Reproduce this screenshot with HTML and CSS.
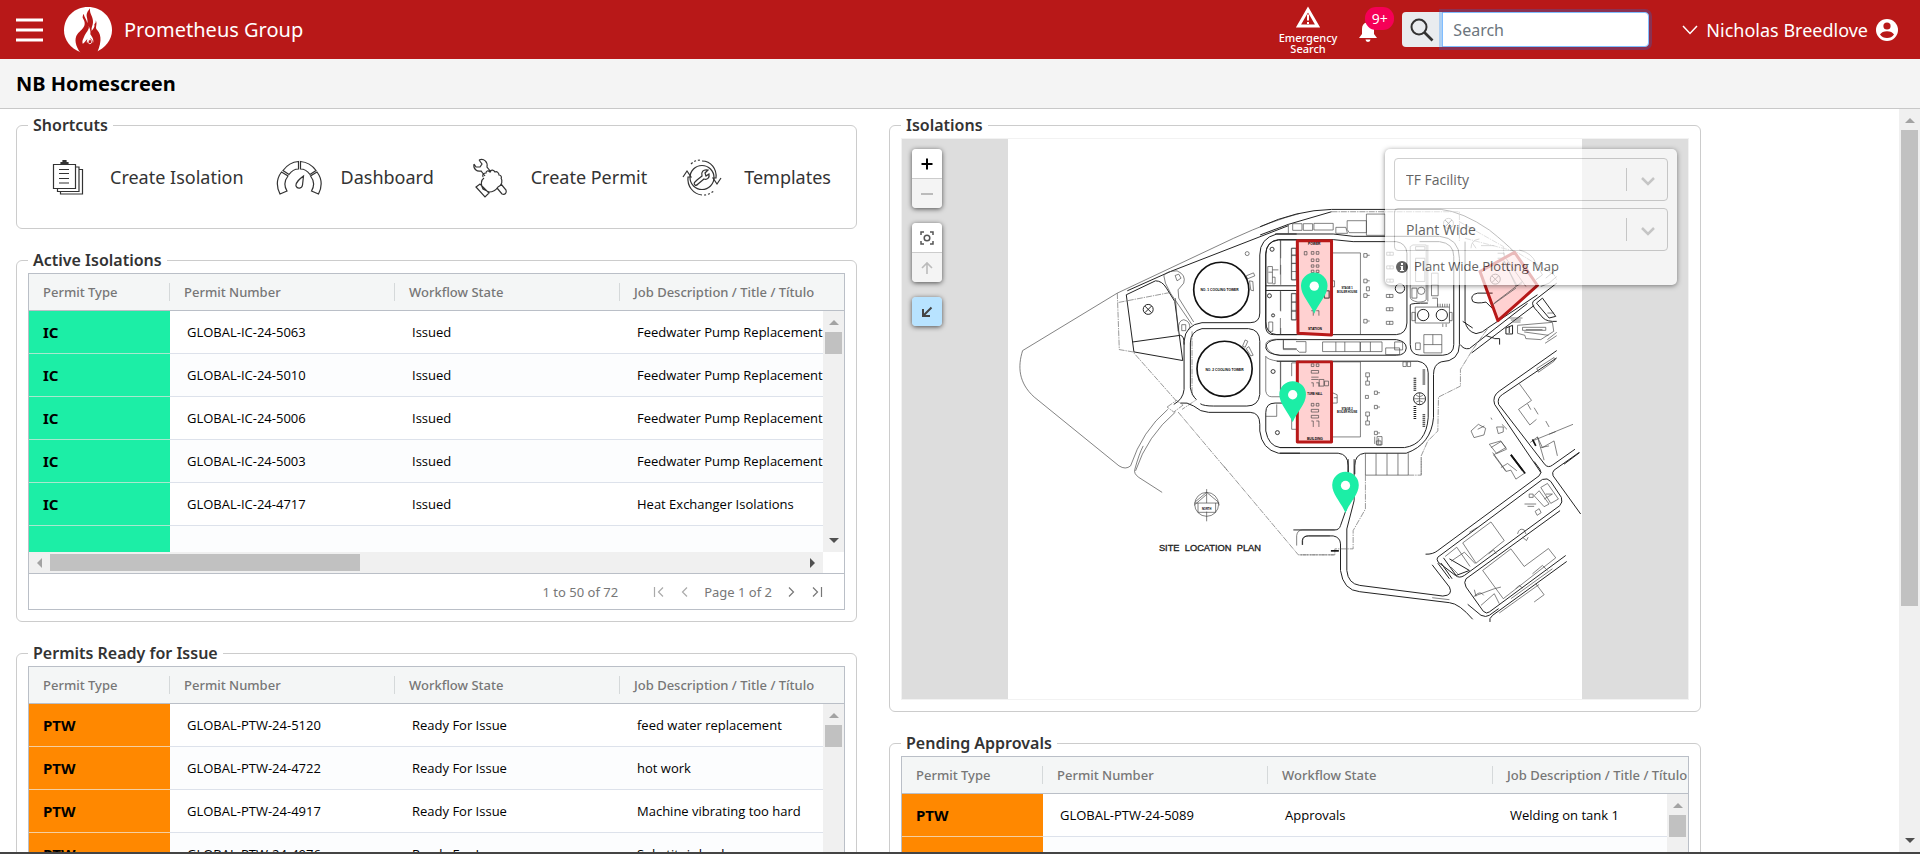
FILE: index.html
```html
<!DOCTYPE html>
<html lang="en">
<head>
<meta charset="utf-8">
<title>NB Homescreen</title>
<link rel="stylesheet" href="styles.css">
</head>
<body>
<header class="topbar">
  <button class="icon-btn" aria-label="Menu"><svg width="28" height="26" viewBox="0 0 28 26" stroke="#fff" stroke-width="3"><path d="M0 3H27M0 13H27M0 23H27"/></svg></button>
  <svg class="logo" width="48" height="46" viewBox="0 0 144 138"><path fill="#fff" d="M72 0C32 0 0 30 0 70c0 28 18 54 50 66h44c30-12 50-38 50-66C144 30 112 0 72 0z"/><path fill="#b81818" d="M50 138C34 118 30 96 40 82c7-10 20-16 22-30 1-8-2-12-6-20 0-6 1-8 3-12 1 10 9 16 11 28 3-12-6-20 0-32 2-4 4-6 8-12-2 18 10 24 9 42 0 10-6 16-4 26 4-6 10-10 8-20 4-4 5-6 4-12 6 10-1 18 2 26 12 12 20 32 2 72z"/><path fill="#fff" d="M74 56c4 12-10 20-14 34-4 10-6 12-4 20 6-2 8-8 14-14 0 4-3 8-1 12 2-6 8-8 10-14 4 4 8 6 8 14 4-10-4-20-8-26 2-10-2-18-5-26z"/><path fill="none" stroke="#fff" stroke-width="3" d="M78 96c-8 8-6 14 0 14 8-2 6-8 0-14z"/></svg>
  <span class="brand">Prometheus Group</span>
  <div class="tools">
    <button class="emergency"><svg width="24" height="22" viewBox="0 0 24 22"><path fill="none" stroke="#fff" stroke-width="3" d="M12 3.500 21.500 20h-19z"/><path stroke="#fff" stroke-width="2" d="M12 8.500v6M12 16v2"/></svg><span>Emergency<br>Search</span></button>
    <button class="bell" aria-label="Notifications"><svg width="18" height="22" viewBox="0 0 18 22" fill="#fff"><path d="M9 1c-1 0-1.500.600-1.500 1.500C4.500 3.200 3 5.500 3 9v5l-3 4h18l-3-4V9c0-3.500-1.500-5.800-4.500-6.500C10.500 1.600 10 1 9 1zM6.500 19.500a2.500 2.500 0 0 0 5 0z"/></svg><span class="badge">9+</span></button>
    <div class="search">
      <label for="q" aria-label="Search"><svg width="24" height="24" viewBox="0 0 24 24" fill="none" stroke="#333" stroke-width="2"><circle cx="9" cy="9" r="7.500"/><path d="m14.500 14.500 8 8" stroke-width="2.600"/></svg></label>
      <input id="q" type="text" placeholder="Search">
    </div>
    <button class="user"><svg width="16" height="10" viewBox="0 0 16 10" fill="none" stroke="#fff" stroke-width="1.500"><path d="m1 1 7 7.500L15 1"/></svg><span>Nicholas Breedlove</span><svg class="avatar" width="22" height="22" viewBox="0 0 22 22"><circle cx="11" cy="11" r="11" fill="#fff"/><circle cx="11" cy="7" r="3.600" fill="#b81818"/><path fill="#b81818" d="M4 15.500c2-4.500 12-4.500 14 0-3 4.700-11 4.700-14 0z"/></svg></button>
  </div>
</header>
<h1 class="title">NB Homescreen</h1>
<main class="page">
  <div class="board">
    <div class="col">
      <fieldset class="panel">
        <legend>Shortcuts</legend>
        <div class="shortcuts">
          <a href="#isolation"><svg viewBox="0 0 48 48" width="48" height="48"><path d="M9.500 11.500h22v24h-22zM31.500 14h3.500v24.500H13.500V35.500M35 16.500h3.500v24.500H16.500v-2.500M15 16.500h10M15 20.500h10M15 25.500h10M15 30h10"/><path d="M17 11.500v-2h2v-2h3v2h2v2z" fill="#333"/></svg>Create Isolation</a>
          <a href="#dashboard"><svg viewBox="0 0 48 48" width="48" height="48"><path d="M5 41C1 33 2 25 6.500 19l6.500 4c-4 5-4 10-1 15zM43.500 41c4-8 3-16-1.500-22l-6.500 4c4 5 4 10 1 15zM8 17.500C12 12 17 9 23.500 8.500V16c-4 0-7 2-9.500 5.500zM41 17.500C37 12 31.500 9 25.500 8.500V16c4 0 7 2 9.500 5.500zM28.500 23c-4 3-8 6-7.500 10 1.500 3.500 6 2.500 6.500-1z"/></svg>Dashboard</a>
          <a href="#permit"><svg viewBox="0 0 48 48" width="48" height="48"><path d="M9 11c-1 5 3 8 7 7l4 5M14 7l3 4-2 3-4 0-2-3M14 7c5-2 9 2 8 7l4 5M19 25c-4 3-3 7-1 11l6 3c4 0 7-2 9-5 4-2 5-6 3-9M18 24c-1-3 1-4 3-4 0-2 2-3 4-1 1-3 4-2 5 0 2-1 4 1 4 3 2 0 3 2 2 4M11 34l4-3 9 9-4 4zM32 35l5 6c3 1 5-1 4-4l-5-6"/></svg>Create Permit</a>
          <a href="#templates"><svg viewBox="0 0 48 48" width="48" height="48"><circle cx="24" cy="24.500" r="12"/><path d="M17 32c-2-2 0-3 2-5l5-4c-1-4 1-7 6-6l-3 3 1 3 3-2c1 4-2 6-5 5l-6 5c-1 1-2 2-3 1zM5 24l4-6 4 6H10c-1 9 5 17 14 18M43 25l-4 6-4-6h3c1-9-5-17-14-17"/><path stroke-dasharray="2 2" d="M13 11c3-3 6-4 10-4M26 42c4 0 7-2 10-4"/></svg>Templates</a>
        </div>
      </fieldset>

      <fieldset class="panel">
        <legend>Active Isolations</legend>
        <div class="grid">
          <div class="view view-active">
            <table class="permits ic">
              <thead><tr><th>Permit Type</th><th>Permit Number</th><th>Workflow State</th><th>Job Description / Title / Título</th></tr></thead>
              <tbody>
                <tr><td>IC</td><td>GLOBAL-IC-24-5063</td><td>Issued</td><td>Feedwater Pump Replacement</td></tr>
                <tr><td>IC</td><td>GLOBAL-IC-24-5010</td><td>Issued</td><td>Feedwater Pump Replacement</td></tr>
                <tr><td>IC</td><td>GLOBAL-IC-24-5006</td><td>Issued</td><td>Feedwater Pump Replacement</td></tr>
                <tr><td>IC</td><td>GLOBAL-IC-24-5003</td><td>Issued</td><td>Feedwater Pump Replacement</td></tr>
                <tr><td>IC</td><td>GLOBAL-IC-24-4717</td><td>Issued</td><td>Heat Exchanger Isolations</td></tr>
                <tr><td></td><td></td><td></td><td></td></tr>
              </tbody>
            </table>
            <div class="vscroll"><i class="up"></i><i class="thumb"></i><i class="down"></i></div>
          </div>
          <div class="hscroll"><div class="track"><i class="left"></i><i class="thumb"></i><i class="right"></i></div></div>
          <div class="pager">
            <span>1 to 50 of 72</span>
            <nav>
              <button disabled aria-label="First page"><svg width="14" height="12" viewBox="0 0 14 12"><path d="M2.500 1v10M11 1.500 6.500 6l4.500 4.500"/></svg></button>
              <button disabled aria-label="Previous page"><svg width="14" height="12" viewBox="0 0 14 12"><path d="M9 1.500 4.500 6 9 10.500"/></svg></button>
              <span>Page 1 of 2</span>
              <button aria-label="Next page"><svg width="14" height="12" viewBox="0 0 14 12"><path d="M5 1.500 9.500 6 5 10.500"/></svg></button>
              <button aria-label="Last page"><svg width="14" height="12" viewBox="0 0 14 12"><path d="M11.500 1v10M3 1.500 7.500 6 3 10.500"/></svg></button>
            </nav>
          </div>
        </div>
      </fieldset>

      <fieldset class="panel">
        <legend>Permits Ready for Issue</legend>
        <div class="grid">
          <div class="view view-ready">
            <table class="permits ptw">
              <thead><tr><th>Permit Type</th><th>Permit Number</th><th>Workflow State</th><th>Job Description / Title / Título</th></tr></thead>
              <tbody>
                <tr><td>PTW</td><td>GLOBAL-PTW-24-5120</td><td>Ready For Issue</td><td>feed water replacement</td></tr>
                <tr><td>PTW</td><td>GLOBAL-PTW-24-4722</td><td>Ready For Issue</td><td>hot work</td></tr>
                <tr><td>PTW</td><td>GLOBAL-PTW-24-4917</td><td>Ready For Issue</td><td>Machine vibrating too hard</td></tr>
                <tr><td>PTW</td><td>GLOBAL-PTW-24-4976</td><td>Ready For Issue</td><td>Substituir lead</td></tr>
              </tbody>
            </table>
            <div class="vscroll"><i class="up"></i><i class="thumb"></i></div>
          </div>
        </div>
      </fieldset>
    </div>

    <div class="col">
      <fieldset class="panel">
        <legend>Isolations</legend>
        <div class="map">
          <svg class="plan" viewBox="0 0 1728 1686" role="img" aria-label="Site location plan">
            <rect width="1728" height="1686" fill="#fff"/>
            <g class="ink" transform="translate(-381 -81)">
              <path class="thin" d="M1260 305Q1180 325 1060 380L710 545 425 718C410 765 412 815 460 858L715 1065Q735 1078 750 1065Q785 960 862 895"/>
              <path d="M1225 342 870 480 740 538"/>
              <path d="M737 550 825 508Q845 508 858 530L883 570 907 748 760 722zM757 692 900 672Q912 674 911 700"/>
              <path class="dash" d="M710 545 716 715 757 722 888 870M714 573 870 543M893 903 1042 1080M860 888 888 868 908 882 880 903zM935 660V850L948 866 905 895"/>
              <circle cx="803" cy="594" r="15"/><path d="m793 584 20 20m0-20-20 20"/>
              <path class="thin" d="M850 492Q860 478 890 478Q918 490 910 515L893 535 895 560 940 632M850 492 855 515 870 545 935 640M885 560 893 660"/>
              <path class="thin" d="M884 492 895 488 902 500 890 508zM895 655Q892 628 910 625Q932 630 928 655M904 640h12v18h-12zM1098 493 1120 484 1124 493 1102 502zM1108 508 1118 510 1120 538 1112 536zM1087 705 1095 686 1103 690 1095 708zM1098 712 1106 706 1119 732 1112 734z"/>
              <circle class="bold" cx="1023" cy="535" r="83"/><circle class="bold" cx="1033" cy="773" r="83"/>
              <path d="M1250 367H1190Q1139 380 1139 430V605Q1139 634 1110 634H965Q915 640 911 690V835Q908 865 880 880M1250 385H1195Q1157 390 1157 430V650Q1160 670 1180 670H1250M1157 523H1250M1157 537H1250"/>
              <path d="M1105 652Q1139 655 1139 690V850Q1135 885 1100 885H1000Q970 885 960 878M1105 652H965Q930 660 930 695V830Q935 855 948 865"/>
              <path d="M900 876Q920 872 940 885 960 903 985 904H1110Q1139 905 1139 940V960Q1145 1015 1195 1027H1260M1250 876H1185Q1157 876 1157 905V960Q1165 1005 1200 1010H1260"/>
              <path class="thin" d="M1250 684H1185Q1157 687 1157 700 1165 730 1200 733H1260M1260 750H1195Q1160 745 1157 735V840Q1160 857 1175 857H1240M1202 385V440M1202 460V520M1202 540V600M1202 650V670M1202 750V857M1210 685V712H1250M1190 880V916H1157"/>
              <path class="thin" d="M1235 410h15v95h-15zM1235 430h15M1235 455h15M1235 480h15M1235 547h15v78h-15zM1235 572h15M1235 597h15M1235 755h15v100M1235 755v40M1163 465h14v50h-14zM1177 475h18M1177 497h8v20h-8M1166 632h12v28h-12zM1235 905h15v50h-15zM1165 482h12"/>
              <g class="thin"><circle cx="1176" cy="413" r="6"/><circle cx="1101" cy="426" r="6"/><circle cx="1168" cy="553" r="6"/><circle cx="1179" cy="612" r="5"/><circle cx="1179" cy="781" r="6"/><circle cx="1192" cy="965" r="6"/></g>
              <path class="thin" d="M765 1080Q800 975 885 903"/>
            </g>
            <g class="ink" transform="translate(759 -21)">
              <path d="M0 285Q110 235 215 233H545Q610 240 690 295 740 335 766 362"/>
              <path d="M0 310 85 278 215 240"/><path class="dash" d="M215 240H600V330M617 320 770 360 885 430 893 445M600 270 733 345V370"/>
              <path d="M45 307H220L280 314H540Q600 320 600 380V640Q600 690 545 692 522 700 522 730V860Q515 940 440 967H315Q285 970 285 1005V1030M60 967H235Q265 970 265 1005V1030"/>
              <path d="M55 324H220L280 330H410Q440 335 442 365V575Q440 608 410 610H50Q17 608 17 570V365Q20 328 55 324"/>
              <path d="M50 625H410Q440 630 440 650 438 672 410 672H60Q20 668 17 650 17 628 50 625zM50 690H475Q505 695 506 725V860Q500 940 435 950H60"/>
              <path class="thin" d="M188 632h113v29H188zM228 632v29M255 632v29M302 632h65v29h-65zM332 632v29M378 650h42v20h-42zM405 632h24v24h-24zM70 627v28h40l8 8h20v-32h-30M85 278v28M98 276h28v20H98zM130 276h28v20h-28zM162 275h58v20h-58zM228 287h30l5 18h-35zM262 267h58v36h-52l-6-10zM320 247h56v64h-56zM218 364h84v245M218 692h84v226h-84M61 324v105M61 478v60M61 560v50M61 690v105M430 692h10v14h-10zM443 692h10v14h-10z"/>
              <path class="thin" d="M94 350h14v95H94zM94 372h14M94 396h14M94 486h14v80H94zM94 512h14M94 540h14M200 478h9v22h-15v-22M218 448h6v18h-6zM218 785l14 6v25h-14M222 800h10"/>
              <g class="thin"><circle cx="36" cy="353" r="6"/><circle cx="39" cy="721" r="6"/><circle cx="52" cy="905" r="6"/><circle cx="28" cy="493" r="6"/><circle cx="39" cy="552" r="4"/></g>
              <path class="thin" d="M312 366h10v11h-10zM322 371h8M312 443h10v11h-10zM322 448h8M320 466h9v12h-9zM312 487h10v11h-10zM322 492h8M312 564h10v11h-10zM322 569h8M381 362h20v9h-20zM391 362v9M381 403h20v9h-20zM391 403v9M381 443h20v9h-20zM391 443v9M380 489h20v9h-20zM390 489v9M380 529h20v9h-20zM390 529v9M380 570h20v9h-20zM390 570v9"/>
              <path class="thin" d="M318 725h11v12h-11zM323 737v13M318 750h11v12h-11zM317 793h9v9h-9zM318 843h11v12h-11zM323 855v15M318 870h11v12h-11zM344 780h9v10h-9zM353 785h8M344 823h9v10h-9zM353 828h8M344 901h9v10h-9zM353 906h8M352 917h15v25h-15zM345 917v22M357 922v18"/>
              <path d="M480 330H540Q583 335 583 375V640Q583 670 550 672H480Q452 670 452 640V520Q455 515 505 515"/>
              <path class="thin" d="M460 340h40v165q-5 7-25 7-23-5-23-15V345zM468 345h28v10h-28zM468 380h28v70h-28zM457 470h15v30h-15zM467 527h103v48H467zM457 543h10v25h-10zM570 543h8v25h-8zM493 610h54v55h-54zM493 640h54M520 610v30M468 635h14v20h-14zM516 425h20v68h-20zM516 460h20M518 500h16v26M535 527v-10M542 527v-10M549 527v-10M556 527v-10M563 527v-10M570 527v-10M505 340v170M550 577v10M560 577v10"/>
              <circle cx="491" cy="551" r="17"/><circle cx="547" cy="551" r="17"/><circle cx="421" cy="471" r="14"/><circle cx="485" cy="478" r="11" class="thin"/>
              <circle cx="567" cy="275" r="15" class="thin"/><path d="m557 265 20 20m0-20-20 20"/><circle cx="708" cy="443" r="15"/><path d="m698 433 20 20m0-20-20 20"/>
              <path d="M617 330V570Q622 600 650 607 670 605 685 590L835 490M603 640Q612 655 630 652L805 516M637 665 825 522"/>
              <path class="thin" d="M635 350q0-25 25-28M640 335l10 15M665 342h40M715 365h20v15h-20M733 387l40 75 15-5M740 380l60 85M780 355q40 10 50 40l20 35-20 15M860 440l30-25M845 465l25-10 23-20"/>
              <path d="M700 485H655Q630 490 640 510 652 518 680 512L705 537M610 570 640 590M893 455 822 510Q815 520 835 540L852 560Q865 572 893 570M832 515 850 500 890 555 870 560zM740 590l20-8v26h-20zM750 585v20M705 622h16v18M680 613l25 8"/>
              <path class="thin" d="M775 582 880 573 884 600 845 625 800 622 797 612 775 606zM790 588h70v9h-70zM750 560h40M755 566h30M760 572h24M858 636 893 613M865 625 893 603M800 595h50M795 602 868 612M885 545h-20"/>
              <path class="dash" d="M685 592 640 655 603 715V765L537 798 535 900 505 930 485 975V1035"/>
              <circle cx="480" cy="803" r="18"/><path class="thin" d="M480 785v36M462 803h36M470 793q10 8 20 0M470 813q10-8 20 0"/>
              <path class="tick" d="M493 715v45M466 740v40M466 825v40M493 850v38"/>
              <path d="M893 658 720 780Q698 795 706 820L845 1025M893 680 730 790Q713 800 718 820L858 1002Q868 1012 880 1003L948 955M915 1000 962 965"/>
              <path class="thin" d="M833 712 885 679Q893 683 885 690L838 723zM780 757 817 808 778 835 812 882 832 865M825 830l12 20M805 818l10 18M860 870l10 18M820 930 942 880M870 910l20-8M813 935 835 918 850 950 885 930 895 975M835 918 855 988M845 950 870 945M690 940 725 930 742 955 712 968zM700 965 740 1020M725 1010l20-12 28 22M635 900l22-20 22 12-5 20-30 8zM655 895l20-10M712 888h20v15l-15 5zM728 880l15 15M695 860l3 6"/>
              <path class="bold" d="M755 972 790 1018M820 925 830 945"/>
            </g>
            <g class="ink" transform="translate(-381 909)">
              <path class="thin" d="M845 155 775 110Q758 98 763 85 775 40 788 15"/>
              <path class="dash" d="M1030 75 1255 343H1365"/>
              <path class="thin" d="M1250 315V285Q1252 268 1268 268H1365M1268 313V295Q1270 286 1285 286H1350"/>
              <g class="thin"><circle cx="979" cy="191" r="36"/><path d="M979 145V187M979 213V242M941 187H1017M945 183 979 155 1013 183 1017 194M941 194 979 161M953 187V215H1006V187"/></g>
            </g>
            <g class="ink" transform="translate(879 909)">
              <path d="M145 55V190L122 255Q118 268 105 268H-20M163 55V180L141 265V390Q145 430 180 435L430 467Q462 465 450 440L398 373M7 313V300Q10 286 25 286H100Q121 290 122 310V390Q130 450 180 454L450 487Q480 490 520 537"/>
              <path class="thin" d="M197 37V103H326M229 37V103M262 37V103M295 37V103M326 37V103M398 472 450 478"/>
              <path class="dash" d="M326 103H365V50M197 103V205L160 270V325H105V343H0"/><path class="bold" d="M93 331H117"/>
              <path d="M378 341Q400 342 415 330L720 105Q730 95 722 85L705 62M415 350 730 116Q745 110 755 122L787 170Q792 185 782 195L495 405Q480 415 468 405L416 365Q410 355 415 350M845 220 762 105Q758 95 765 88L840 35M783 210 500 415Q492 425 500 440L552 513Q562 522 570 515L800 345"/>
              <path d="M572 545Q568 535 580 525L803 363M505 492 545 525Q560 532 570 525L598 505M432 352 470 405 510 390 450 355M415 368 450 415M425 368 458 415"/>
              <path class="thin" d="M490 307 575 244 615 300 530 368zM437 348 472 320 512 378M455 362 495 335 528 370M550 390 635 325 675 378 748 324 770 352 612 475zM523 468 585 445 605 440M545 495 585 460 600 490M525 448l5 20M528 465q15-15 25 0M705 485 735 463 710 430M600 518 720 432M635 475 760 385M700 400l30-25 15 15M510 275l25-15M455 380 475 400M568 340l15-12 8 12M650 445l10-10 10 8M655 280q5-20 20-12l5 12M670 290l12 10 5-10"/>
              <path class="thin" d="M575 20 605 2 620 20 583 42M583 42 620 92 635 88 650 115 675 98M725 140 745 128 778 175 755 188zM705 165 720 150 750 190 735 198zM690 160h12v10h-12zM708 212l12-8 6 12-12 8zM740 160h20M735 175l25-15M676 190h35M685 197h20"/>
              <path class="bold" d="M635 42 678 98"/>
              <path d="M230 0h14v12h-14z" class="thin"/>
            </g>
            <g class="lettering">
              <text x="637" y="458">NO. 1 COOLING TOWER</text><text x="652" y="697">NO. 2 COOLING TOWER</text>
              <text x="598" y="1117" class="fine">NORTH</text>
              <g class="fine"><text x="1021" y="453">STAGE 1</text><text x="1021" y="463">BOILER HOUSE</text><text x="1021" y="815">STAGE 2</text><text x="1021" y="825">BOILER HOUSE</text></g>
              <text x="608" y="1239" class="caption">SITE  LOCATION  PLAN</text>
            </g>
            <g transform="translate(759 -21)">
              <g class="zone"><path d="M112 327H215V611L114 606z"/><path d="M112 692H215V933H112z"/><path d="M766 362 835 462 716 568 662 420z"/></g>
              <g class="ink thin"><path d="M133 360h8v10h-8zM154 360h8v8h-8zM169 360h8v8h-8zM154 382h8v8h-8zM169 382h8v8h-8zM154 400h8v7h-8zM169 400h8v7h-8zM154 416h8v7h-8zM169 416h8v7h-8zM154 538h6v15M169 538h8v15M193 478h14v22h-14z"/><path d="M154 698h8v8h-8zM169 698h8v8h-8zM154 718h22v8h-22zM154 738h22M154 745h22M154 755h6v12M169 755h8v12M178 745h14v20h-14zM194 750h12v14h-12zM154 817h8v8h-8zM169 817h8v8h-8zM154 835h22v8h-22zM154 853h22v8h-22zM154 870h6v18M169 870h8v18M735 388l35 75M705 515l85-65M700 520l70-50"/></g>
              <g class="lettering"><text x="163" y="341">POWER</text><text x="165" y="596">STATION</text><text x="165" y="792" class="fine">TURB HALL</text><text x="165" y="927">BUILDING</text></g>
              <g class="pin">
                <path d="M163 547C150 515 123 492 123 463a40 40 0 0 1 80 0C203 492 176 515 163 547z"/><circle cx="163" cy="464" r="14"/>
                <path d="M98 874C85 842 58 819 58 790a40 40 0 0 1 80 0C138 819 111 842 98 874z"/><circle cx="98" cy="791" r="14"/>
                <path d="M257 1147C244 1115 217 1092 217 1063a40 40 0 0 1 80 0C297 1092 270 1115 257 1147z"/><circle cx="257" cy="1064" r="14"/>
              </g>
            </g>
          </svg>
          <div class="controls">
            <div class="stack"><button aria-label="Zoom in"><svg width="12" height="12" viewBox="0 0 12 12" stroke="#000" stroke-width="2"><path d="M6 .500v11M.500 6h11"/></svg></button><button disabled aria-label="Zoom out"><svg width="12" height="12" viewBox="0 0 12 12" stroke="#bbb" stroke-width="2"><path d="M0 6h12"/></svg></button></div>
            <div class="stack"><button aria-label="Center map"><svg width="14" height="14" viewBox="0 0 14 14" fill="none" stroke="#555" stroke-width="1.500"><path d="M1 4V1h3M10 1h3v3M13 10v3h-3M4 13H1v-3"/><circle cx="7" cy="7" r="2.800"/></svg></button><button disabled aria-label="Go up"><svg width="14" height="14" viewBox="0 0 14 14" fill="none" stroke="#bbb" stroke-width="1.600"><path d="M7 13V2M2 7l5-5 5 5"/></svg></button></div>
            <div class="stack"><button class="active" aria-label="Collapse"><svg width="12" height="12" viewBox="0 0 12 12" fill="none" stroke="#444" stroke-width="2"><path d="M10.500 1.500 3 9M2 3v7h7"/></svg></button></div>
          </div>
          <div class="picker">
            <div class="choice"><select aria-label="Facility"><option>TF Facility</option></select><svg width="16" height="10" viewBox="0 0 16 10"><path d="m2 2 6 6 6-6"/></svg></div>
            <div class="choice"><select aria-label="Area"><option>Plant Wide</option></select><svg width="16" height="10" viewBox="0 0 16 10"><path d="m2 2 6 6 6-6"/></svg></div>
            <p><svg width="12" height="12" viewBox="0 0 12 12"><circle cx="6" cy="6" r="6" fill="#222"/><path fill="#fff" d="M5 2h2v2H5zM4.500 5H7v4h1v1H4V9h1V6h-.500z"/></svg>Plant Wide Plotting Map</p>
          </div>
        </div>
      </fieldset>

      <fieldset class="panel">
        <legend>Pending Approvals</legend>
        <div class="grid">
          <div class="view view-ready">
            <table class="permits ptw">
              <thead><tr><th>Permit Type</th><th>Permit Number</th><th>Workflow State</th><th>Job Description / Title / Título</th></tr></thead>
              <tbody>
                <tr><td>PTW</td><td>GLOBAL-PTW-24-5089</td><td>Approvals</td><td>Welding on tank 1</td></tr>
                <tr><td></td><td></td><td></td><td></td></tr>
              </tbody>
            </table>
            <div class="vscroll"><i class="up"></i><i class="thumb"></i></div>
          </div>
        </div>
      </fieldset>
    </div>
  </div>
  <div class="pagescroll"><i class="up"></i><i class="thumb"></i><i class="down"></i></div>
</main>
</body>
</html>
```
FILE: styles.css
```css
* { box-sizing: border-box; }
body { margin: 0; height: 100vh; display: flex; flex-direction: column; overflow: hidden; background: #fff; color: #333; font-family: "Noto Sans", sans-serif; font-size: 16px; }
button, input, select { font: inherit; color: inherit; }
button { border: 0; padding: 0; background: none; }
svg { flex: none; display: block; }

/* top bar */
.topbar { flex: none; height: 59px; background: #b81818; color: #fff; display: flex; align-items: center; padding: 0 22px 0 16px; }
.logo { margin: 0 12px 0 20px; }
.brand { font-size: 20px; }
.tools { margin-left: auto; display: flex; align-items: center; }
.emergency { display: flex; flex-direction: column; align-items: center; font-size: 11px; font-weight: 500; line-height: 11px; gap: 4px; }
.bell { position: relative; margin: 2px 25px 0 22px; }
.badge { position: absolute; left: 6px; top: -13px; width: 29px; height: 23px; border-radius: 11px; background: #f50057; font-size: 14px; line-height: 23px; text-align: center; }
.search { display: flex; height: 35px; }
.search label { width: 40px; background: #e9ecef; border-radius: 4px 0 0 4px; display: flex; align-items: center; justify-content: center; }
.search input { width: 207px; border: 1px solid #80bdff; border-radius: 0 4px 4px 0; padding: 0 10px; background: #fff; color: #495057; outline: 0; box-shadow: 0 0 0 3px rgba(0, 123, 255, .25); }
.search input::placeholder { color: #6c757d; opacity: 1; }
.user { display: flex; align-items: center; gap: 8px; margin-left: 33px; font-size: 18px; }
.title { flex: none; margin: 0; height: 50px; padding: 0 16px; background: #f4f4f4; border-bottom: 1px solid #c8c8c8; color: #000; font-size: 20px; font-weight: 700; line-height: 50px; }

/* page */
.page { flex: 1; min-height: 0; display: flex; overflow: hidden; border-bottom: 2px solid #444; }
.board { flex: 1; min-width: 0; display: grid; grid-template-columns: 841fr 812fr 166fr; gap: 32px; padding: 5px 0 0 16px; align-items: start; }
.col { display: flex; flex-direction: column; gap: 20px; min-width: 0; }
.panel { margin: 0; min-width: 0; border: 1px solid #ccc; border-radius: 6px; padding: 2px 11px 11px; }
.panel legend { padding: 0 5px; font-size: 16px; font-weight: 600; line-height: 22px; }
.shortcuts { display: flex; justify-content: space-between; align-items: center; padding: 15px 14px 16px 16px; }
.shortcuts a { display: flex; align-items: center; gap: 18px; color: #333; font-size: 18px; text-decoration: none; }
.shortcuts svg { fill: none; stroke: #333; stroke-width: 1.2; }

/* data grids */
.grid { border: 1px solid #babfc7; background: #fff; }
.view { position: relative; overflow: hidden; }
.view-active { height: 278px; }
.view-ready { height: 300px; }
.permits { width: 100%; table-layout: fixed; border-collapse: separate; border-spacing: 0; }
.permits th { height: 37px; padding: 0 14px; background: #f4f6f6; border-bottom: 1px solid #babfc7; color: #777; font-size: 13px; font-weight: 500; text-align: left; white-space: nowrap; background-image: linear-gradient(#d5d9da, #d5d9da); background-repeat: no-repeat; background-size: 1px 18px; background-position: right center; }
.permits th:last-child { background-image: none; }
.permits th:nth-child(1) { width: 141px; }
.permits th:nth-child(2), .permits th:nth-child(3) { width: 225px; }
.permits td { height: 43px; padding: 0 17px; border-bottom: 1px solid #dde2eb; color: #000; font-family: "Open Sans", "Noto Sans", sans-serif; font-size: 13px; white-space: nowrap; }
.permits tr:nth-child(even) td { background: #fcfdfe; }
.permits td:first-child, .permits tr:nth-child(even) td:first-child { padding: 0 14px; font-family: "Noto Sans", sans-serif; font-size: 15px; font-weight: 700; }
.permits.ic tr td:first-child { background: #1ceea6; border-color: #a8e8ce; }
.permits.ptw tr td:first-child { background: #ff8800; border-color: #f5cfa0; }
.vscroll { position: absolute; top: 37px; right: 0; bottom: 0; width: 21px; background: #f0f0f0; display: flex; flex-direction: column; align-items: center; }
.vscroll .thumb { width: 17px; height: 22px; margin-top: 7px; background: #c1c1c1; }
.up, .down { width: 0; height: 0; border: 5px solid transparent; }
.up { border-top: 0; border-bottom-color: #a3a3a3; margin-top: 9px; }
.down { border-bottom: 0; border-top-color: #505050; margin-top: auto; margin-bottom: 9px; }
.hscroll { display: flex; padding-right: 21px; }
.track { flex: 1; height: 21px; background: #f0f0f0; display: flex; align-items: center; }
.track .thumb { width: 39%; height: 17px; margin-left: 8px; background: #c1c1c1; }
.left, .right { border: 5px solid transparent; }
.left { border-left: 0; border-right-color: #a3a3a3; margin-left: 8px; }
.right { border-right: 0; border-left-color: #505050; margin: 0 8px 0 auto; }
.pager { height: 36px; border-top: 1px solid #babfc7; display: flex; justify-content: flex-end; align-items: center; gap: 34px; padding-right: 20px; color: #777; font-size: 13px; }
.pager nav { display: flex; align-items: center; gap: 12px; }
.pager svg { fill: none; stroke: #777; stroke-width: 1.2; }
.pager button:disabled svg { stroke: #aaa; }

/* map */
.map { position: relative; height: 562px; background: #ddd; border: 1px solid #f2f2f2; }
.plan { width: 100%; height: 100%; }
.ink { fill: none; stroke: #222; stroke-width: 3; }
.thin { stroke: #444; stroke-width: 2; }
.bold { stroke: #111; stroke-width: 5; }
.dash { stroke: #666; stroke-width: 2; stroke-dasharray: 18 3 4 3; }
.tick { stroke-width: 8; stroke-dasharray: 3 3; }
.lettering { font-family: "Liberation Sans", sans-serif; font-size: 10px; font-weight: 700; fill: #000; text-anchor: middle; }
.lettering .fine { font-size: 8px; }
.lettering .caption { font-size: 28px; font-weight: 400; fill: #222; stroke: #222; stroke-width: 1; white-space: pre; }
.zone { fill: rgba(255, 0, 0, .18); stroke: #b81818; stroke-width: 9; stroke-linejoin: round; }
.pin path { fill: #1ceea6; }
.pin circle { fill: #fff; }
.controls { position: absolute; left: 10px; top: 10px; display: flex; flex-direction: column; gap: 15px; }
.stack { width: 30px; border-radius: 4px; overflow: hidden; box-shadow: 0 1px 5px rgba(0, 0, 0, .65); }
.stack button { width: 100%; height: 29px; background: #fff; display: flex; align-items: center; justify-content: center; }
.stack button + button { height: 30px; border-top: 1px solid #ccc; }
.stack button:disabled { background: #f4f4f4; }
.stack .active { background: #b8e3ff; }
.picker { position: absolute; right: 11px; top: 10px; width: 292px; padding: 9px 9px 10px; border-radius: 5px; background: #fff; box-shadow: 0 1px 5px rgba(0, 0, 0, .65); opacity: .7; color: #222; font-family: "Open Sans", "Noto Sans", sans-serif; font-size: 14px; }
.choice { position: relative; margin-bottom: 7px; }
.choice select { appearance: none; display: block; width: 100%; height: 43px; border: 1px solid #bbb; border-radius: 4px; background: transparent; padding: 0 11px; }
.choice svg { position: absolute; right: 12px; top: 18px; fill: none; stroke: #bbb; stroke-width: 2.5; }
.choice::after { content: ""; position: absolute; right: 41px; top: 10px; height: 23px; border-left: 1px solid #bbb; }
.picker p { margin: 0; display: flex; align-items: center; gap: 6px; line-height: 17px; padding-left: 2px; font-size: 13px; }

/* page scrollbar */
.pagescroll { flex: none; width: 21px; background: #f0f0f0; display: flex; flex-direction: column; align-items: center; }
.pagescroll .thumb { width: 17px; height: 64%; margin-top: 7px; background: #c1c1c1; }
```
